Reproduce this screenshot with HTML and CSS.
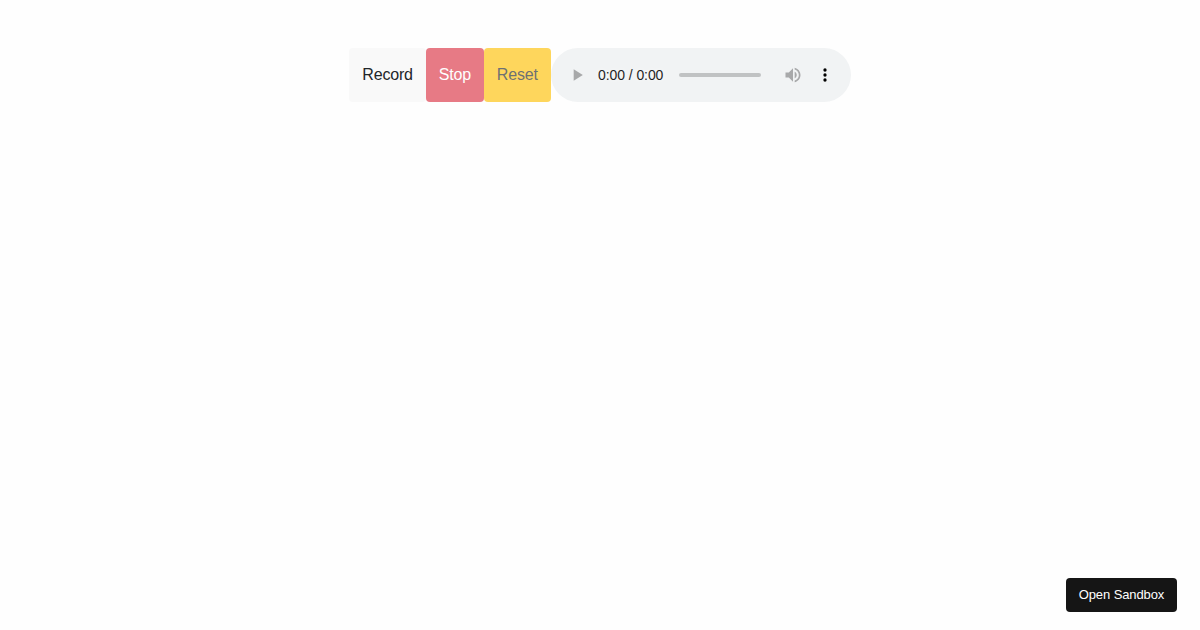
FILE: index.html
```html
<!DOCTYPE html>
<html lang="en">
<head>
<meta charset="utf-8">
<title>Recorder</title>
<link rel="stylesheet" href="styles.css">
</head>
<body>
<main class="recorder">
  <button class="btn btn-record" type="button">Record</button>
  <button class="btn btn-stop" type="button">Stop</button>
  <button class="btn btn-reset" type="button">Reset</button>
  <audio class="player" controls></audio>
</main>
<a class="sandbox" href="#">Open Sandbox</a>
</body>
</html>
```
FILE: styles.css
```css
* { box-sizing: border-box; }
html, body { height: 100%; }
body {
  margin: 0;
  height: 630px;
  background: #fefefe;
  font-family: "Liberation Sans", Arial, sans-serif;
  overflow: hidden;
  position: relative;
}
.recorder {
  display: flex;
  justify-content: center;
  align-items: center;
  padding-top: 48px;
}
.btn {
  height: 54px;
  padding: 0 13px;
  border: 0;
  border-radius: 4px;
  font: 16px "Liberation Sans", Arial, sans-serif;
  letter-spacing: -0.2px;
}
.btn-record { background: #f9f9f9; color: #212529; }
.btn-stop { background: #dc3545; color: #fff; opacity: .65; }
.btn-reset { background: #ffc107; color: #212529; opacity: .65; }
.player { display: block; width: 300px; height: 54px; }
.player::-webkit-media-controls-current-time-display,
.player::-webkit-media-controls-time-remaining-display {
  font-family: "Liberation Sans", Arial, sans-serif;
  letter-spacing: -0.1px;
}
.sandbox {
  position: absolute;
  right: 23px;
  bottom: 18px;
  width: 111px;
  height: 34px;
  padding-bottom: 1px;
  display: flex;
  align-items: center;
  justify-content: center;
  background: #151515;
  border-radius: 4px;
  color: #fff;
  font: 13px "Liberation Sans", Arial, sans-serif;
  letter-spacing: -0.1px;
  text-decoration: none;
}
```
